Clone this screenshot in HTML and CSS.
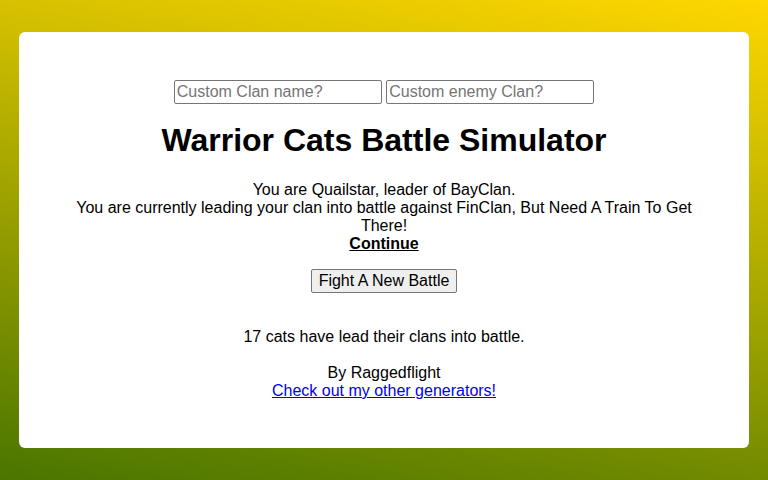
FILE: index.html
```html
<!DOCTYPE html>
<html lang="en">
<head>
    <meta charset="UTF-8">
    <meta name="viewport" content="width=device-width, initial-scale=1.0">
    <title>Warrior Cats Battle Simulator</title>
    <link rel="stylesheet" href="styles.css">
</head>
<body>
    <div class="container">
        <div class="custom">
            <input type="text" id="clan-name" placeholder="Custom Clan name?">
            <input type="text" id="enemy-name" placeholder="Custom enemy Clan?">
        </div>

        <h1>Warrior Cats Battle Simulator</h1>

        <div id="story" class="story">
            You are Quailstar, leader of BayClan.<br>
            You are currently leading your clan into battle against FinClan, But Need A Train To Get There!<br>
            <a href="#" class="continue">Continue</a>
        </div>

        <button class="btn">Fight A New Battle</button>

        <p class="counter">17 cats have lead their clans into battle.</p>

        <p class="credit">
            By Raggedflight<br>
            <a href="#">Check out my other generators!</a>
        </p>
    </div>
</body>
</html>
```

FILE: styles.css
```css
html, body {
    margin: 0;
    height: 100%;
}
body {
    font-family: "Liberation Sans", Arial, sans-serif;
    font-size: 16px;
    color: #000;
    background: linear-gradient(190deg, #ffd700, #4a7500);
    padding: 32px 19px;
    box-sizing: border-box;
}
.container {
    background: white;
    border-radius: 6px;
    height: 416px;
    box-sizing: border-box;
    padding: 48px 20px 0;
    text-align: center;
}
.custom input {
    width: 208px;
    height: 24px;
    box-sizing: border-box;
    font-family: inherit;
    font-size: 16px;
    padding: 1px 2px;
    border: 1px solid #767676;
    border-radius: 2px;
    margin: 0;
}
.custom input::placeholder { color: #757575; }
h1 {
    font-size: 32px;
    margin: 18px 0 22px;
}
.story {
    line-height: 18px;
    padding: 0 37px;
}
.continue {
    color: #000;
    font-weight: bold;
}
.btn {
    font-family: inherit;
    font-size: 16px;
    margin-top: 16px;
    padding: 1px 7px;
    height: 24px;
    border: 1px solid #767676;
    border-radius: 2px;
    background: #efefef;
    color: #000;
}
.counter {
    margin: 35px 0 18px;
    line-height: 18px;
}
.credit {
    margin: 0;
    line-height: 18px;
}
.credit a { color: #0000ee; }
```
